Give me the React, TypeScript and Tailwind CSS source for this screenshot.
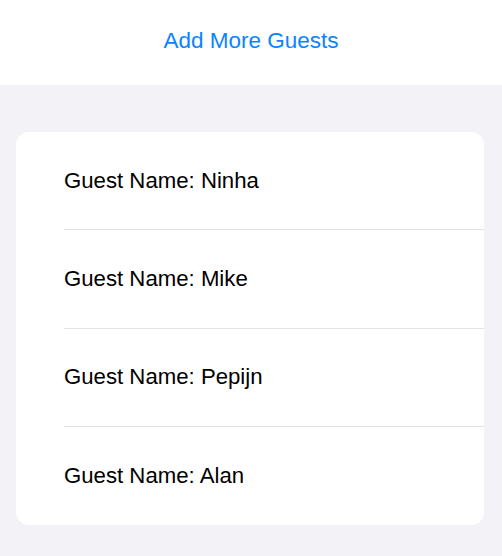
const guests = ['Ninha', 'Mike', 'Pepijn', 'Alan'];

export default function App() {
  return (
    <div className="h-[556px] w-full bg-[#f2f2f7] font-['Liberation_Sans',sans-serif]">
      <div className="flex h-[85px] items-center justify-center bg-white pb-[3px]">
        <button className="text-[22.5px] text-[#0a84ff]">Add More Guests</button>
      </div>
      <div className="pl-4 pr-[18px] pt-[47px]">
        <div className="overflow-hidden rounded-[13px] bg-white">
          {guests.map((name, i) => (
            <div key={name} className="pl-12">
              <div
                className={
                  i < guests.length - 1
                    ? 'flex h-[98.25px] items-center border-b border-[#e3e3e6] text-[22.2px] text-black'
                    : 'flex h-[98.25px] items-center text-[22.2px] text-black'
                }
              >
                Guest Name: {name}
              </div>
            </div>
          ))}
        </div>
      </div>
    </div>
  );
}
